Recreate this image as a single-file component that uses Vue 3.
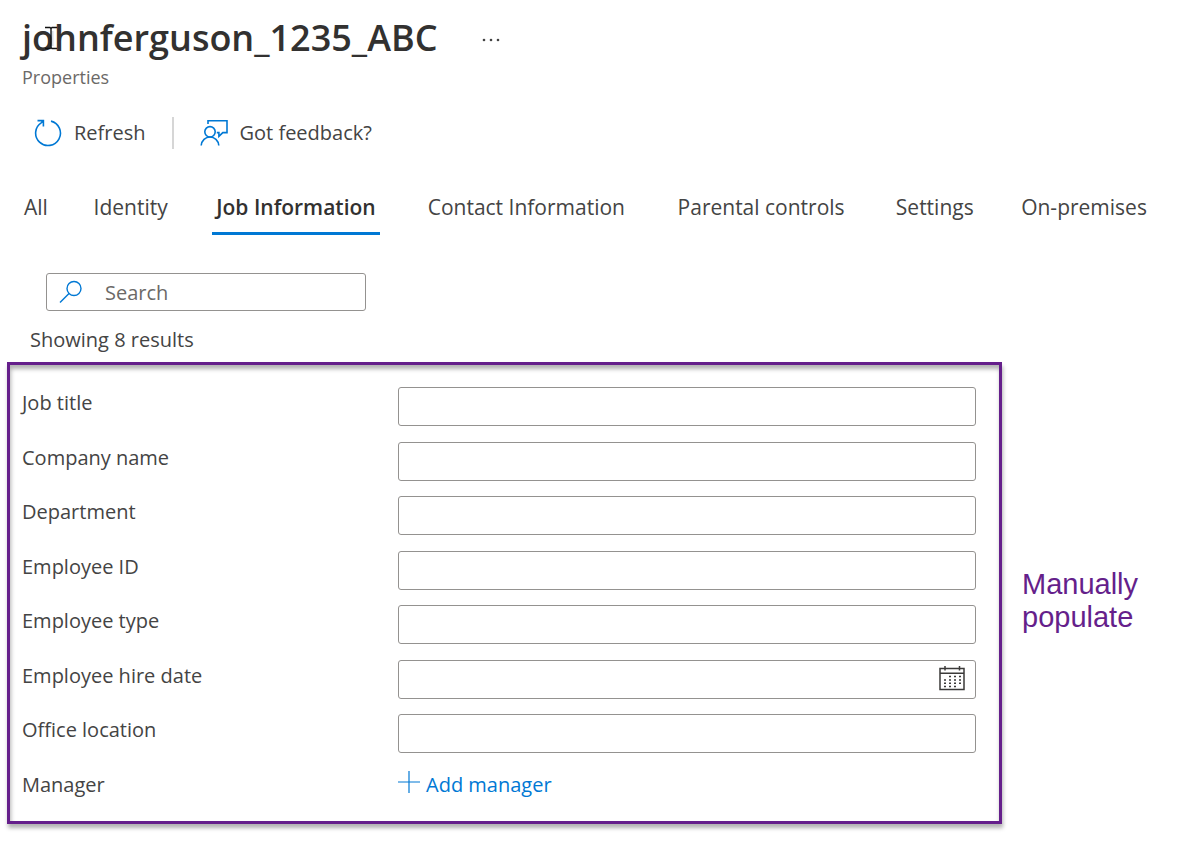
<template>
  <div class="blade">
    <header class="blade-head">
      <div class="title-row">
        <h1 class="title">johnferguson_1235_ABC</h1>
        <button class="more" type="button" aria-label="More">
          <svg width="20" height="4" viewBox="0 0 20 4">
            <circle cx="3" cy="2" r="1.3" /><circle cx="10" cy="2" r="1.3" /><circle cx="17" cy="2" r="1.3" />
          </svg>
        </button>
        <svg class="ibeam" width="14" height="24" viewBox="0 0 14 24">
          <path class="ibeam-halo" d="M8.5 5V20" />
          <path d="M1 1.5H6L7 2.5L8 1.5H13M7 2.5V21.5M1 22.5H6L7 21.5L8 22.5H13" />
        </svg>
      </div>
      <p class="subtitle">Properties</p>
    </header>

    <div class="toolbar">
      <button class="cmd" type="button">
        <svg width="28" height="28" viewBox="0 0 28 28" class="ico">
          <path d="M17 2.1A12.4 12.4 0 1 1 7.5 3.6L9.3 2M3.5 1.6H9.4V7.4" />
        </svg>
        Refresh
      </button>
      <span class="divider"></span>
      <button class="cmd" type="button">
        <svg width="28" height="28" viewBox="0 0 28 28" class="ico">
          <circle cx="10" cy="12.8" r="5.2" />
          <path d="M1.2 26.5C1.6 21.5 5.4 18 10 18S18.4 21.5 18.8 26.5M8 5V1.7H27V13.6H22.8L18.9 17.4V13.6H16.8" />
        </svg>
        Got feedback?
      </button>
    </div>

    <nav class="tabs">
      <a v-for="t in tabs" :key="t" href="#" class="tab" :class="{ active: t === activeTab }"
        :data-label="t" @click.prevent="activeTab = t">{{ t }}</a>
    </nav>

    <div class="search">
      <svg width="24" height="24" viewBox="0 0 24 24" class="ico search-ico">
        <circle cx="15" cy="8.5" r="7" /><path d="M10 13.6L1 22.5" />
      </svg>
      <input v-model="query" class="search-input" type="text" placeholder="Search" aria-label="Search" />
    </div>
    <p class="count">Showing 8 results</p>

    <div class="content">
      <form class="panel" @submit.prevent>
        <div v-for="f in fields" :key="f.id" class="row">
          <label class="label" :for="f.id">{{ f.label }}</label>
          <div class="field">
            <input :id="f.id" v-model="f.value" class="input" type="text" />
            <button v-if="f.date" class="cal" type="button" aria-label="Pick a date">
              <svg width="28" height="26" viewBox="0 0 28 26">
                <path class="cal-frame" d="M2 3.5H26V24.5H2ZM2 8.3H26M7 1V5.5M21.5 1V5.5" />
                <path class="cal-dots" d="M11 11.5H23M6 15H23M6 18.3H23M6 21.5H18" />
              </svg>
            </button>
          </div>
        </div>
        <div class="row">
          <span class="label">Manager</span>
          <a href="#" class="add" @click.prevent>
            <svg width="22" height="22" viewBox="0 0 22 22" class="ico plus"><path d="M11 0V22M0 11H22" /></svg>
            Add manager
          </a>
        </div>
      </form>
      <p class="note">Manually populate</p>
    </div>
  </div>
</template>

<script setup>
import { ref, reactive } from 'vue'

const tabs = ['All', 'Identity', 'Job Information', 'Contact Information', 'Parental controls', 'Settings', 'On-premises']
const activeTab = ref('Job Information')
const query = ref('')

const fields = reactive([
  { id: 'job-title', label: 'Job title', value: '' },
  { id: 'company', label: 'Company name', value: '' },
  { id: 'department', label: 'Department', value: '' },
  { id: 'employee-id', label: 'Employee ID', value: '' },
  { id: 'employee-type', label: 'Employee type', value: '' },
  { id: 'hire-date', label: 'Employee hire date', value: '', date: true },
  { id: 'office', label: 'Office location', value: '' },
])
</script>

<style>
body { background: #fff; }
</style>

<style scoped>
.blade {
  padding: 14px 20px 20px 7px;
  font-family: "Open Sans", "Noto Sans", sans-serif;
  font-size: 20px; line-height: 28px; color: #444;
}
button { font: inherit; color: inherit; background: none; border: none; padding: 0; cursor: pointer; }
a { color: inherit; text-decoration: none; }
h1, p { margin: 0; }
.ico { fill: none; stroke: #0078d4; stroke-width: 1.6; flex-shrink: 0; }

.blade-head { padding-left: 15px; }
.title-row { display: flex; align-items: center; gap: 43px; position: relative; }
.title { font-size: 36px; line-height: 48px; font-weight: 600; color: #323130; }
.more { display: flex; fill: #444; padding-top: 4px; }
.ibeam { position: absolute; left: 22px; top: 12px; fill: none; stroke: #111; stroke-width: 1.4; }
.ibeam-halo { stroke: #d5dde6; stroke-width: 2; }
.subtitle { font-size: 18px; line-height: 30px; color: #6b6967; }

.toolbar { display: flex; align-items: center; gap: 26px; padding: 24px 0 0 27px; }
.cmd { display: flex; align-items: center; gap: 12px; line-height: 34px; }
.divider { width: 2px; height: 32px; background: #d6d6d6; }

.tabs { display: flex; gap: 36px; padding: 43px 0 0 13px; }
.tab { padding: 0 4px 11px; border-bottom: 3px solid transparent; font-size: 21px; white-space: nowrap; }
/* reserves the bold width so tabs don't shift when selected */
.tab::after { content: attr(data-label); display: block; height: 0; overflow: hidden; visibility: hidden; font-weight: 600; }
.tab.active { margin-right: 8px; font-weight: 600; color: #323130; border-bottom-color: #0078d4; }

.search {
  display: flex; align-items: center; gap: 22px;
  width: 320px; height: 38px; margin: 38px 0 0 39px; padding: 0 12px;
  box-sizing: border-box; border: 1px solid #949290; border-radius: 3px;
}
.search-ico { stroke-width: 1.4; }
.search-input { flex: 1; min-width: 0; border: none; outline: none; padding: 2px 0 0; font: inherit; color: #444; background: none; }
.search-input::placeholder { color: #6b6967; opacity: 1; }
.count { padding: 15px 0 8px 23px; }

.content { display: flex; align-items: center; gap: 20px; }
.panel {
  flex: 1; padding: 22px 23px 0 12px;
  border: 3px solid #651f8b;
  box-shadow: 1px 4px 4px rgba(0,0,0,0.3), inset 1px 4px 4px rgba(0,0,0,0.3);
}
.row { display: grid; grid-template-columns: 376px 1fr; align-items: start; height: 55px; }
.row:nth-child(even) { height: 54px; }
.row:last-child { height: 52px; }
.label { padding-top: 2px; }
.field { position: relative; display: flex; }
.input {
  width: 100%; height: 39px; box-sizing: border-box; padding: 0 12px;
  border: 1px solid #949290; border-radius: 3px; font: inherit; color: #444; outline: none;
}
.input:focus { border-color: #0078d4; }
.cal { position: absolute; right: 10px; top: 5px; display: flex; fill: none; stroke: #3b3a39; }
.cal-frame { stroke-width: 1.5; }
.cal-dots { stroke-width: 1.6; stroke-dasharray: 2 3; }
.add { display: flex; align-items: center; gap: 6px; padding-top: 2px; color: #0078d4; }
.plus { stroke-width: 1.2; margin-bottom: 6px; }
.note {
  width: 158px; padding-top: 16px; font-family: "Liberation Sans", Arial, sans-serif;
  font-size: 29px; line-height: 33px; color: #651f8b;
}
</style>
